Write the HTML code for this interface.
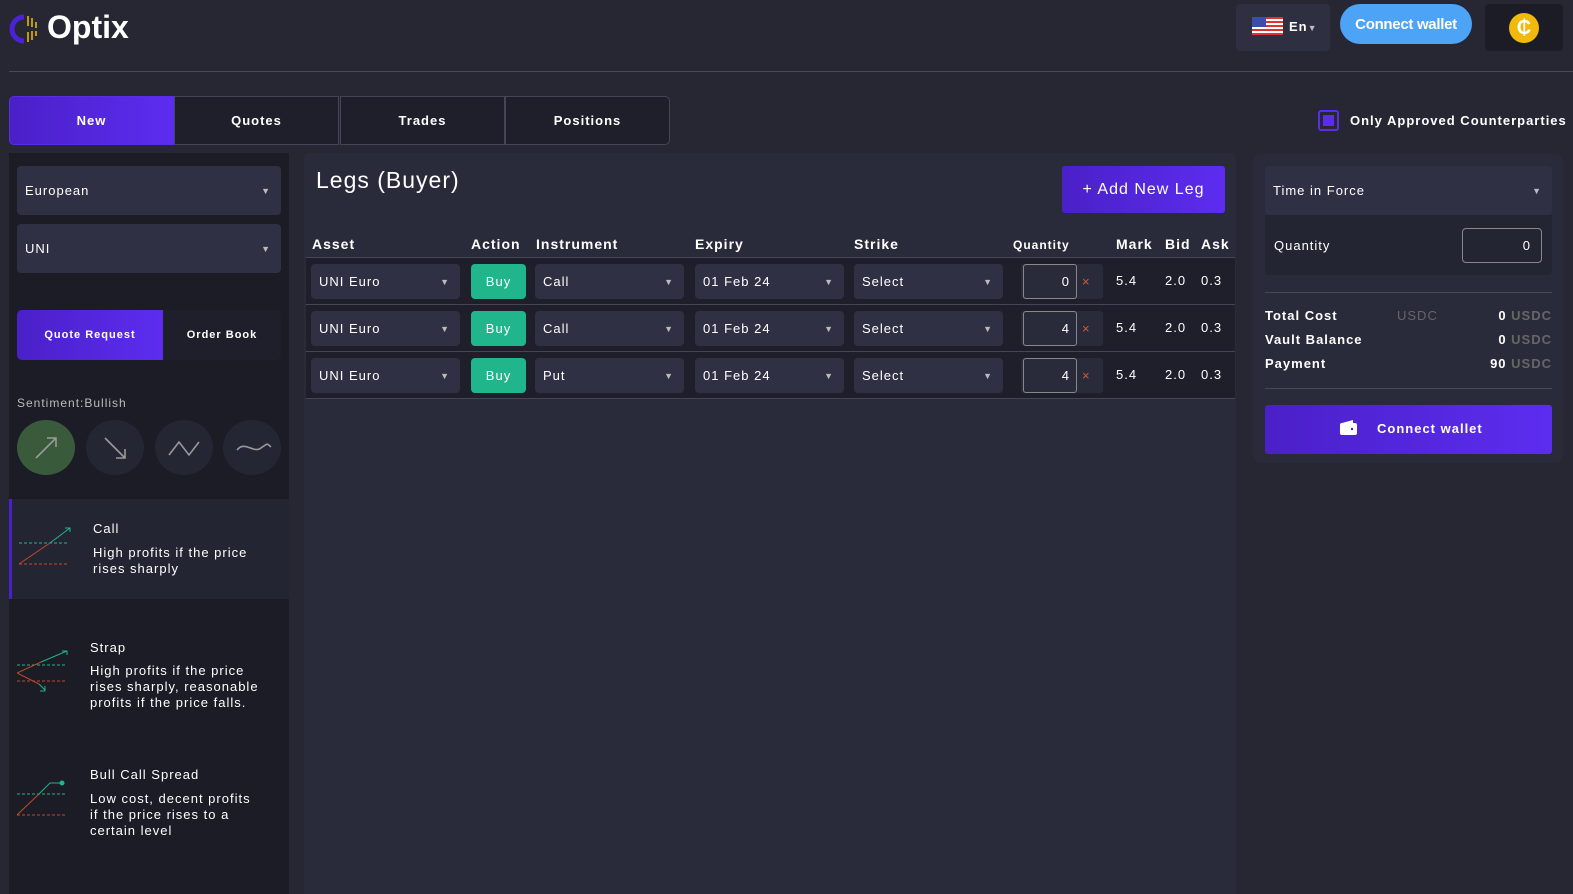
<!DOCTYPE html>
<html><head><meta charset="utf-8"><style>
*{box-sizing:border-box;margin:0;padding:0}
html{overflow:hidden;width:1573px;height:894px}
body{width:1573px;height:894px;background:#262733;font-family:"Liberation Sans",sans-serif;color:#fff;position:relative;overflow:hidden;letter-spacing:1px}
.abs{position:absolute}
.sel{position:absolute;background:#2f3044;border-radius:4px;font-size:13px;display:flex;align-items:center;padding-left:8px}
.sel:after{content:"▼";position:absolute;right:10px;font-size:9px;color:#bbb}
.buy{position:absolute;background:#20b58a;border-radius:4px;font-size:13px;display:flex;align-items:center;justify-content:center;width:55px;height:35px}
.qty{position:absolute;width:82px;height:35px;background:#2a2b3a;border-radius:3px}
.qty .in{position:absolute;left:2px;top:0;width:54px;height:35px;border:1px solid #888;border-radius:3px;text-align:right;padding-right:6px;line-height:33px;font-size:13px}
.qty .x{position:absolute;left:61px;top:0;line-height:35px;color:#d25a3a;font-size:13px}
.num{position:absolute;font-size:13px}
.th{position:absolute;top:236px;font-size:14px;font-weight:bold}
.row{position:absolute;left:306px;width:929px;height:47px;background:#1e1f2a;border-bottom:1px solid #444556}
.tab{position:absolute;top:96px;height:49px;width:165px;border:1px solid #444556;background:#1f1f2b;font-size:13px;font-weight:bold;display:flex;align-items:center;justify-content:center}
.circ{position:absolute;top:420px;width:58px;height:55px;border-radius:50%;background:#252633}
</style></head><body>
<!-- header -->
<svg class="abs" style="left:9px;top:13px" width="32" height="32" viewBox="0 0 32 32"><path d="M15 4 A12 12 0 0 0 15 28" stroke="#4b22d6" stroke-width="5" fill="none"/><g stroke="#f2c200" stroke-width="1.5"><line x1="19" y1="3" x2="19" y2="13"/><line x1="23" y1="5" x2="23" y2="14"/><line x1="27" y1="9" x2="27" y2="15"/><line x1="19" y1="19" x2="19" y2="29"/><line x1="23" y1="18" x2="23" y2="27"/><line x1="27" y1="18" x2="27" y2="23"/></g></svg>
<div class="abs" style="left:47px;top:9px;font-size:32px;font-weight:bold;letter-spacing:0">Optix</div>
<div class="abs" style="left:9px;top:71px;width:1564px;height:1px;background:#474858"></div>
<div class="abs" style="left:1236px;top:4px;width:94px;height:47px;background:#2e2f41;border-radius:4px"></div>
<svg class="abs" style="left:1252px;top:17px" width="31" height="18"><rect width="31" height="18" fill="#fff"/><g fill="#d33"><rect y="0" width="31" height="2"/><rect y="4" width="31" height="2"/><rect y="8" width="31" height="2"/><rect y="12" width="31" height="2"/><rect y="16" width="31" height="2"/></g><rect width="14" height="10" fill="#3b4fa8"/></svg>
<div class="abs" style="left:1289px;top:19px;font-size:13px;font-weight:bold">En<span style="font-size:9px;color:#bbb">▼</span></div>
<div class="abs" style="left:1340px;top:4px;width:132px;height:40px;border-radius:20px;background:#4da3f5;font-size:15px;font-weight:bold;letter-spacing:-0.3px;display:flex;align-items:center;justify-content:center">Connect wallet</div>
<div class="abs" style="left:1485px;top:4px;width:78px;height:47px;background:#1c1c26;border-radius:4px"></div>
<div class="abs" style="left:1509px;top:13px;width:30px;height:30px;border-radius:50%;background:#f0b90b;color:#fff;font-size:20px;font-weight:bold;text-align:center;line-height:30px;letter-spacing:0">₵</div>
<!-- tabs -->
<div class="tab" style="left:9px;background:linear-gradient(90deg,#4a20c8,#5c2df0);border-color:#5a2ee8;border-radius:5px 0 0 5px">New</div>
<div class="tab" style="left:174px">Quotes</div>
<div class="tab" style="left:340px">Trades</div>
<div class="tab" style="left:505px;border-radius:0 5px 5px 0">Positions</div>
<div class="abs" style="left:1318px;top:110px;width:21px;height:21px;border:2px solid #5a2ee8;border-radius:3px;padding:3px"><div style="width:100%;height:100%;background:#5a2ee8"></div></div>
<div class="abs" style="left:1350px;top:113px;font-size:13px;font-weight:bold">Only Approved Counterparties</div>
<!-- sidebar -->
<div class="abs" style="left:9px;top:153px;width:280px;height:741px;background:#1b1c26"></div>
<div class="sel" style="left:17px;top:166px;width:264px;height:49px">European</div>
<div class="sel" style="left:17px;top:224px;width:264px;height:49px">UNI</div>
<div class="abs" style="left:17px;top:310px;width:264px;height:50px;background:#1f1f2b;border-radius:5px"></div>
<div class="abs" style="left:17px;top:310px;width:146px;height:50px;background:linear-gradient(90deg,#4a20c8,#5c2df0);border-radius:5px 0 0 5px;font-size:11px;font-weight:bold;display:flex;align-items:center;justify-content:center">Quote Request</div>
<div class="abs" style="left:163px;top:310px;width:118px;height:50px;font-size:11px;font-weight:bold;display:flex;align-items:center;justify-content:center">Order Book</div>
<div class="abs" style="left:17px;top:396px;font-size:12px;color:#bbb">Sentiment:Bullish</div>
<div class="circ" style="left:17px;background:#3a5a3c"></div>
<div class="circ" style="left:86px"></div>
<div class="circ" style="left:155px"></div>
<div class="circ" style="left:223px"></div>
<svg class="abs" style="left:17px;top:420px" width="264" height="55" fill="none" stroke="#999" stroke-width="1.6"><path d="M19 38 L39 18 M30 18 H39 V27"/><path d="M88 18 L108 38 M99 38 H108 V29"/><path d="M152 35 L162 22 L172 35 L182 22"/><path d="M220 30 C228 20,236 34,244 28 S250 24,254 27"/></svg>
<div class="abs" style="left:9px;top:499px;width:280px;height:100px;background:#242533;border-left:3px solid #4a20c8"></div>
<svg class="abs" style="left:17px;top:520px" width="60" height="340" fill="none" stroke-width="1"><path d="M2 23 H52" stroke="#20b58a" stroke-dasharray="3 2"/><path d="M2 44 H52" stroke="#c24a2a" stroke-dasharray="3 2"/><path d="M2 44 L33 23" stroke="#c24a2a"/><path d="M33 23 L53 8 M48 8 H53 V12" stroke="#20b58a"/>
<path d="M0 145 H50" stroke="#20b58a" stroke-dasharray="3 2"/><path d="M0 161 H50" stroke="#c24a2a" stroke-dasharray="3 2"/><path d="M0 153 L24 142 M0 153 L22 164" stroke="#c24a2a"/><path d="M24 142 L50 131 M45 131 H50 V135 M22 164 L28 170 M23 171 H28 V166" stroke="#20b58a"/>
<path d="M0 274 H50" stroke="#20b58a" stroke-dasharray="3 2"/><path d="M0 295 H50" stroke="#c24a2a" stroke-dasharray="3 2"/><path d="M0 295 L22 274" stroke="#c24a2a"/><path d="M22 274 L33 263 H45" stroke="#20b58a"/><circle cx="45" cy="263" r="2" fill="#20b58a" stroke="#20b58a"/></svg>
<div class="abs" style="left:93px;top:521px;font-size:13px">Call</div>
<div class="abs" style="left:93px;top:545px;font-size:13px;line-height:16px;width:180px">High profits if the price rises sharply</div>
<div class="abs" style="left:90px;top:640px;font-size:13px">Strap</div>
<div class="abs" style="left:90px;top:663px;font-size:13px;line-height:16px;width:180px">High profits if the price rises sharply, reasonable profits if the price falls.</div>
<div class="abs" style="left:90px;top:767px;font-size:13px">Bull Call Spread</div>
<div class="abs" style="left:90px;top:791px;font-size:13px;line-height:16px;width:172px">Low cost, decent profits if the price rises to a certain level</div>
<!-- main -->
<div class="abs" style="left:304px;top:153px;width:932px;height:741px;background:#2a2b3a;border-radius:6px 6px 0 0"></div>
<div class="abs" style="left:316px;top:167px;font-size:23px;letter-spacing:1px">Legs (Buyer)</div>
<div class="abs" style="left:1062px;top:166px;width:163px;height:47px;background:linear-gradient(90deg,#4a20c8,#5c2df0);border-radius:3px;font-size:16px;display:flex;align-items:center;justify-content:center">+ Add New Leg</div>
<div class="th" style="left:312px">Asset</div><div class="th" style="left:471px">Action</div><div class="th" style="left:536px">Instrument</div><div class="th" style="left:695px">Expiry</div><div class="th" style="left:854px">Strike</div><div class="th" style="left:1013px;font-size:12px;top:238px">Quantity</div><div class="th" style="left:1116px">Mark</div><div class="th" style="left:1165px">Bid</div><div class="th" style="left:1201px">Ask</div>
<div class="abs" style="left:306px;top:257px;width:929px;height:1px;background:#444556"></div>
<div class="row" style="top:258px"></div><div class="row" style="top:305px"></div><div class="row" style="top:352px"></div>

<div class="sel" style="left:311px;top:264px;width:149px;height:35px">UNI Euro</div><div class="buy" style="left:471px;top:264px">Buy</div><div class="sel" style="left:535px;top:264px;width:149px;height:35px">Call</div><div class="sel" style="left:695px;top:264px;width:149px;height:35px">01 Feb 24</div><div class="sel" style="left:854px;top:264px;width:149px;height:35px">Select</div><div class="qty" style="left:1021px;top:264px"><div class="in">0</div><div class="x">×</div></div><div class="num" style="left:1116px;top:273px">5.4</div><div class="num" style="left:1165px;top:273px">2.0</div><div class="num" style="left:1201px;top:273px">0.3</div>

<div class="sel" style="left:311px;top:311px;width:149px;height:35px">UNI Euro</div><div class="buy" style="left:471px;top:311px">Buy</div><div class="sel" style="left:535px;top:311px;width:149px;height:35px">Call</div><div class="sel" style="left:695px;top:311px;width:149px;height:35px">01 Feb 24</div><div class="sel" style="left:854px;top:311px;width:149px;height:35px">Select</div><div class="qty" style="left:1021px;top:311px"><div class="in">4</div><div class="x">×</div></div><div class="num" style="left:1116px;top:320px">5.4</div><div class="num" style="left:1165px;top:320px">2.0</div><div class="num" style="left:1201px;top:320px">0.3</div>

<div class="sel" style="left:311px;top:358px;width:149px;height:35px">UNI Euro</div><div class="buy" style="left:471px;top:358px">Buy</div><div class="sel" style="left:535px;top:358px;width:149px;height:35px">Put</div><div class="sel" style="left:695px;top:358px;width:149px;height:35px">01 Feb 24</div><div class="sel" style="left:854px;top:358px;width:149px;height:35px">Select</div><div class="qty" style="left:1021px;top:358px"><div class="in">4</div><div class="x">×</div></div><div class="num" style="left:1116px;top:367px">5.4</div><div class="num" style="left:1165px;top:367px">2.0</div><div class="num" style="left:1201px;top:367px">0.3</div>
<!-- right panel -->
<div class="abs" style="left:1253px;top:154px;width:310px;height:309px;background:#2a2b3a;border-radius:8px"></div>
<div class="sel" style="left:1265px;top:166px;width:287px;height:49px">Time in Force</div>
<div class="abs" style="left:1265px;top:215px;width:287px;height:60px;background:#242533;border-radius:0 0 4px 4px"></div>
<div class="abs" style="left:1274px;top:238px;font-size:13px">Quantity</div>
<div class="abs" style="left:1462px;top:228px;width:80px;height:35px;border:1px solid #888;border-radius:4px;text-align:right;padding-right:10px;line-height:33px;font-size:13px">0</div>
<div class="abs" style="left:1265px;top:292px;width:287px;height:1px;background:#474858"></div>
<div class="abs" style="left:1265px;top:308px;font-size:13px;font-weight:bold">Total Cost</div>
<div class="abs" style="left:1397px;top:308px;font-size:13px;color:#666">USDC</div>
<div class="abs" style="left:1265px;top:332px;font-size:13px;font-weight:bold">Vault Balance</div>
<div class="abs" style="left:1265px;top:356px;font-size:13px;font-weight:bold">Payment</div>
<div class="abs" style="left:1400px;width:152px;top:308px;font-size:13px;font-weight:bold;text-align:right;line-height:15px">0 <span style="color:#666">USDC</span></div>
<div class="abs" style="left:1400px;width:152px;top:332px;font-size:13px;font-weight:bold;text-align:right;line-height:15px">0 <span style="color:#666">USDC</span></div>
<div class="abs" style="left:1400px;width:152px;top:356px;font-size:13px;font-weight:bold;text-align:right;line-height:15px">90 <span style="color:#666">USDC</span></div>
<div class="abs" style="left:1265px;top:388px;width:287px;height:1px;background:#474858"></div>
<div class="abs" style="left:1265px;top:405px;width:287px;height:49px;background:linear-gradient(90deg,#4a20c8,#5c2df0);border-radius:3px"></div>
<svg class="abs" style="left:1340px;top:420px" width="17" height="15"><rect x="0" y="3" width="17" height="12" rx="2" fill="#fff"/><path d="M2 3 L13 0 L13 3" fill="#fff"/><circle cx="12" cy="9" r="1.2" fill="#4a20c8"/></svg>
<div class="abs" style="left:1377px;top:421px;font-size:13px;font-weight:bold">Connect wallet</div>
</body></html>
